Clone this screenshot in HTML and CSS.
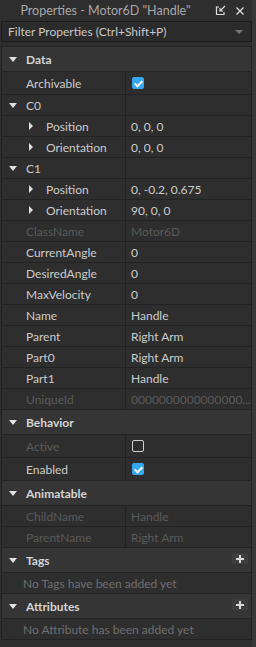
FILE: index.html
```html
<!DOCTYPE html>
<html lang="en">
<head>
    <meta charset="UTF-8">
    <title>Properties</title>
    <link rel="stylesheet" href="styles.css">
</head>
<body>
    <div class="window">
        <div class="panel">
            <div class="title-bar">
                <span class="title">Properties - Motor6D "Handle"</span>
                <span class="title-icons">
                    <svg width="11" height="11" viewBox="0 0 11 11"><path d="M4 2H1.5V9.5H9V7" fill="none" stroke="#ddd" stroke-width="1.2"/><path d="M10 1L5 6M5 3V6H8" fill="none" stroke="#ddd" stroke-width="1.2"/></svg>
                    <svg width="10" height="10" viewBox="0 0 10 10"><path d="M1.5 1.5L8.5 8.5M8.5 1.5L1.5 8.5" stroke="#ddd" stroke-width="1.3"/></svg>
                </span>
            </div>

            <div class="filter">
                <span>Filter Properties (Ctrl+Shift+P)</span>
                <span class="filter-arrow"></span>
            </div>

            <div class="props">
                <!-- Data -->
                <div class="section"><span class="tri-down"></span>Data</div>
                <div class="row tall"><div class="name">Archivable</div><div class="value"><span class="check on"></span></div></div>
                <div class="row"><div class="name"><span class="tri-down small"></span>C0</div><div class="value"></div></div>
                <div class="row"><div class="name sub"><span class="tri-right"></span>Position</div><div class="value">0, 0, 0</div></div>
                <div class="row"><div class="name sub"><span class="tri-right"></span>Orientation</div><div class="value">0, 0, 0</div></div>
                <div class="row"><div class="name"><span class="tri-down small"></span>C1</div><div class="value"></div></div>
                <div class="row"><div class="name sub"><span class="tri-right"></span>Position</div><div class="value">0, -0.2, 0.675</div></div>
                <div class="row"><div class="name sub"><span class="tri-right"></span>Orientation</div><div class="value">90, 0, 0</div></div>
                <div class="row off"><div class="name">ClassName</div><div class="value">Motor6D</div></div>
                <div class="row"><div class="name">CurrentAngle</div><div class="value">0</div></div>
                <div class="row"><div class="name">DesiredAngle</div><div class="value">0</div></div>
                <div class="row"><div class="name">MaxVelocity</div><div class="value">0</div></div>
                <div class="row"><div class="name">Name</div><div class="value">Handle</div></div>
                <div class="row"><div class="name">Parent</div><div class="value">Right Arm</div></div>
                <div class="row"><div class="name">Part0</div><div class="value">Right Arm</div></div>
                <div class="row"><div class="name">Part1</div><div class="value">Handle</div></div>
                <div class="row off"><div class="name">UniqueId</div><div class="value"><span class="ellipsis">0000000000000000...</span></div></div>

                <!-- Behavior -->
                <div class="section"><span class="tri-down"></span>Behavior</div>
                <div class="row tall off"><div class="name">Active</div><div class="value"><span class="check"></span></div></div>
                <div class="row tall"><div class="name">Enabled</div><div class="value"><span class="check on"></span></div></div>

                <!-- Animatable -->
                <div class="section"><span class="tri-down"></span>Animatable</div>
                <div class="row off"><div class="name">ChildName</div><div class="value">Handle</div></div>
                <div class="row off"><div class="name">ParentName</div><div class="value">Right Arm</div></div>

                <!-- Tags -->
                <div class="section"><span class="tri-down"></span>Tags<span class="add-btn"></span></div>
                <div class="row empty">No Tags have been added yet</div>

                <!-- Attributes -->
                <div class="section"><span class="tri-down"></span>Attributes<span class="add-btn"></span></div>
                <div class="row empty">No Attribute has been added yet</div>
            </div>
        </div>
        <div class="edge"></div>
    </div>
</body>
</html>
```

FILE: styles.css
```css
body {
    margin: 0;
    padding: 0;
    background-color: #2e2e2e;
    font-family: Lato, "Open Sans", sans-serif;
    color: #cccccc;
}
.window {
    display: flex;
    width: 256px;
    height: 647px;
    overflow: hidden;
}
.panel {
    width: 252px;
    min-width: 0;
    display: flex;
    flex-direction: column;
}
.edge {
    width: 4px;
    background-color: #383838;
}
/* Title bar */
.title-bar {
    height: 21px;
    display: flex;
    align-items: center;
}
.title {
    flex: 1;
    text-align: center;
    color: #a8a8a8;
    font-size: 12.5px;
    padding-left: 14px;
    white-space: nowrap;
}
.title-icons {
    display: flex;
    gap: 9px;
    align-items: center;
    margin-left: 18px;
    margin-right: 7px;
}
.title-icons svg {
    display: block;
}
/* Filter box */
.filter {
    height: 19px;
    margin-left: 1px;
    border: 1px solid #1b1b1b;
    background-color: #2b2b2b;
    display: flex;
    align-items: center;
    padding-left: 6px;
    padding-right: 8px;
    font-size: 12px;
    color: #c8c8c8;
}
.filter span:first-child {
    flex: 1;
}
.filter-arrow {
    width: 0;
    height: 0;
    border-left: 4px solid transparent;
    border-right: 4px solid transparent;
    border-top: 4px solid #777;
}
/* Property list */
.props {
    margin: 4px 0 0 1px;
    border-top: 1px solid #222;
    border-left: 1px solid #222;
    border-right: 1px solid #222;
    font-size: 12px;
}
.section {
    height: 24px;
    border-bottom: 1px solid #222;
    background-color: #353535;
    display: flex;
    align-items: center;
    font-weight: bold;
    color: #d4d4d4;
    padding-left: 7px;
}
.row {
    height: 20px;
    border-bottom: 1px solid #222;
    display: flex;
}
.row.tall {
    height: 22px;
}
.name {
    width: 124px;
    box-sizing: border-box;
    border-right: 1px solid #222;
    display: flex;
    align-items: center;
    padding-left: 24px;
}
.name.sub {
    padding-left: 27px;
}
.value {
    flex: 1;
    display: flex;
    align-items: center;
    padding-left: 5px;
    min-width: 0;
}
.ellipsis {
    white-space: nowrap;
    overflow: hidden;
}
.row.off .name,
.row.off .value {
    color: #5a5a5a;
}
.row.empty {
    align-items: center;
    padding-left: 21px;
    color: #6f6f6f;
}
/* Triangles */
.tri-down {
    width: 0;
    height: 0;
    border-left: 4px solid transparent;
    border-right: 4px solid transparent;
    border-top: 5px solid #e0e0e0;
    margin-right: 9px;
}
.name .tri-down.small {
    margin-left: -17px;
}
.tri-right {
    width: 0;
    height: 0;
    border-top: 4px solid transparent;
    border-bottom: 4px solid transparent;
    border-left: 4px solid #e0e0e0;
    margin-right: 13px;
}
/* Checkboxes */
.check {
    width: 10px;
    height: 10px;
    border: 1px solid #cfcfcf;
    border-radius: 2px;
    margin-left: 1px;
    position: relative;
}
.check.on {
    background-color: #35a8f0;
    border-color: #35a8f0;
}
.check.on::after {
    content: "";
    position: absolute;
    left: 3px;
    top: 1px;
    width: 3px;
    height: 6px;
    border-right: 2px solid #fff;
    border-bottom: 2px solid #fff;
    transform: rotate(45deg);
}
/* Add buttons */
.add-btn {
    margin-left: auto;
    margin-right: 3px;
    margin-top: -4px;
    width: 16px;
    height: 11px;
    background-color: #3e3e3e;
    position: relative;
}
.add-btn::before,
.add-btn::after {
    content: "";
    position: absolute;
    background-color: #d8d8d8;
}
.add-btn::before {
    left: 4px;
    top: 5px;
    width: 8px;
    height: 2px;
}
.add-btn::after {
    left: 7px;
    top: 2px;
    width: 2px;
    height: 8px;
}
```
